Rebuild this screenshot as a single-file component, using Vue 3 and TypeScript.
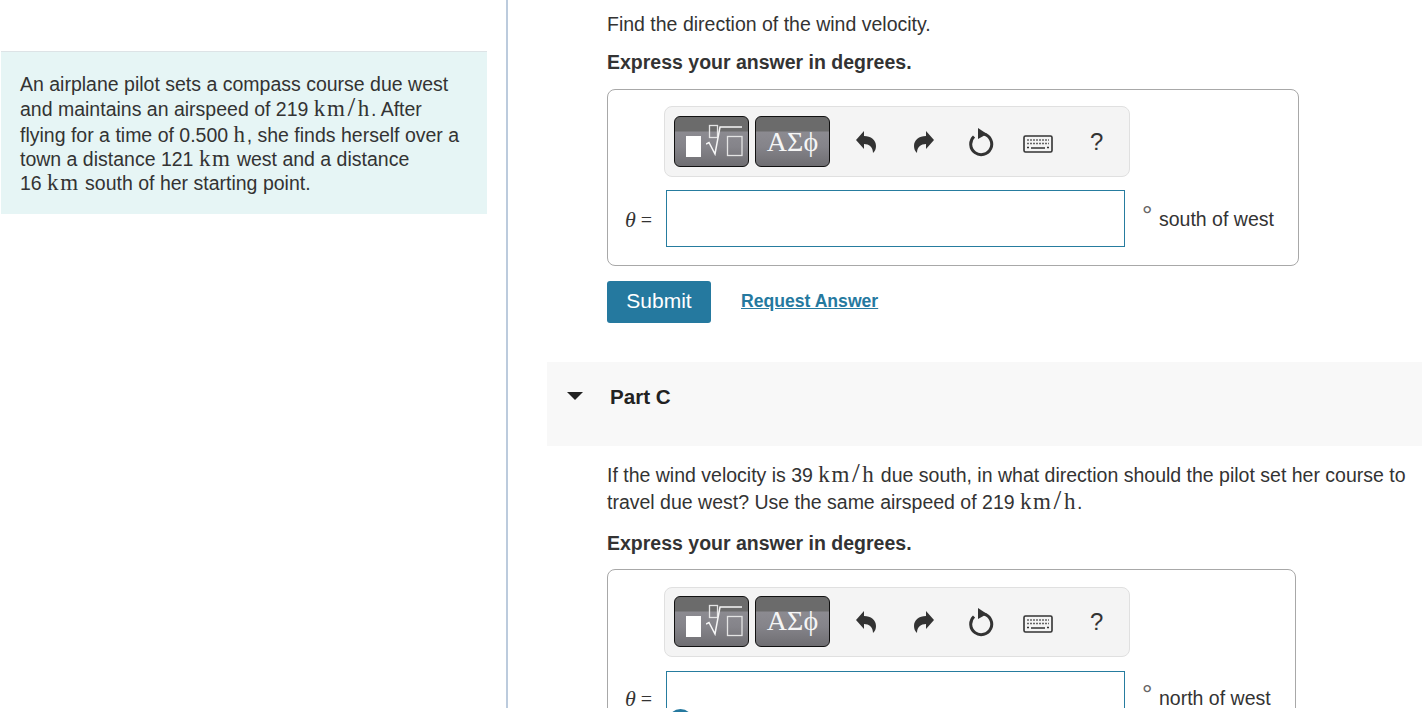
<script setup lang="ts">
interface Part {
  unit: string
  boxClass: string
}
const parts: Part[] = [
  { unit: 'south of west', boxClass: 'box-a' },
  { unit: 'north of west', boxClass: 'box-b' },
]
</script>

<template>
  <div class="page">
    <aside class="left">
      <div class="intro">
        <span class="line">An airplane pilot sets a compass course due west</span>
        <span class="line l2">and maintains an airspeed of 219 <span class="m">km<span class="sl">/</span>h</span>. After</span>
        <span class="line l3">flying for a time of 0.500 <span class="m">h</span>, she finds herself over a</span>
        <span class="line">town a distance 121 <span class="m">km</span> west and a distance</span>
        <span class="line">16 <span class="m">km</span> south of her starting point.</span>
      </div>
    </aside>
    <main class="right">
      <p class="q first">Find the direction of the wind velocity.</p>
      <p class="express e1">Express your answer in degrees.</p>

      <template v-for="(p, i) in parts" :key="p.unit">
        <template v-if="i === 1">
          <div class="actions">
            <button class="submit">Submit</button>
            <a class="req">Request Answer</a>
          </div>
          <div class="band">
            <svg class="tri" width="16" height="8" viewBox="0 0 16 8"><path d="M0 0H16L8 8Z" fill="#222" /></svg>
            <span class="part">Part C</span>
          </div>
          <p class="q para">
            If the wind velocity is 39 <span class="m">km<span class="sl">/</span>h</span> due south, in what direction should the pilot set her course to<br />
            travel due west? Use the same airspeed of 219 <span class="m">km<span class="sl">/</span>h</span>.
          </p>
          <p class="express e2">Express your answer in degrees.</p>
        </template>
        <section class="box" :class="p.boxClass">
          <div class="toolbar">
            <div class="tbtn t1">
              <span class="solid"></span>
              <svg class="root" width="38" height="34" viewBox="0 0 38 34" fill="none">
                <rect x="3.500" y="1.500" width="8" height="12" stroke="#e4e4e4" stroke-width="1.300" />
                <path d="M0 20 L3 18.500 L9 30 L14 3 H36" stroke="#f6f6f6" stroke-width="1.500" />
                <rect x="21.500" y="12.500" width="14.500" height="19" stroke="#e4e4e4" stroke-width="1.300" />
              </svg>
            </div>
            <div class="tbtn t2">ΑΣϕ</div>
            <svg class="ic undo" width="22" height="24" viewBox="0 0 22 24"><path d="M1 10 L9 1 V6 C16 6 21 10 21 16 C21 19 20 21 18 23 C18 17 14 14 9 14 V19 Z" fill="#333" /></svg>
            <svg class="ic redo" width="22" height="24" viewBox="0 0 22 24"><path d="M21 10 L13 1 V6 C6 6 1 10 1 16 C1 19 2 21 4 23 C4 17 8 14 13 14 V19 Z" fill="#333" /></svg>
            <svg class="ic reset" width="26" height="30" viewBox="0 0 26 30" fill="none"><path d="M16 7 A10.500 10.500 0 1 1 6 9.500" stroke="#333" stroke-width="3" /><path d="M10 1 L19 7 L10 12 Z" fill="#333" /></svg>
            <svg class="ic keys" width="30" height="18" viewBox="0 0 30 18">
              <rect x="1" y="1" width="28" height="16" rx="1.500" fill="#f4f4f4" stroke="#333" stroke-width="1.600" />
              <path d="M4 5h22M4 8.500h22" stroke="#666" stroke-width="1.500" stroke-dasharray="2 1" />
              <path d="M4 12.500h2M8 13h14M24 12.500h2" stroke="#333" stroke-width="1.500" />
            </svg>
            <span class="help">?</span>
          </div>
          <div class="answer">
            <span class="lhs"><i class="theta">θ</i> =</span>
            <div class="field"></div>
            <span class="deg">°</span>
            <span class="unit">{{ p.unit }}</span>
          </div>
        </section>
      </template>
    </main>
    <span class="bump"></span>
  </div>
</template>

<style>
html, body { margin: 0; background: #fff; }
</style>

<style scoped>
.page {
  position: relative;
  width: 1426px;
  height: 712px;
  display: flex;
  align-items: flex-start;
  overflow: hidden;
  font-family: "Liberation Sans", Arial, sans-serif;
  font-size: 19.5px;
  color: #333;
  background: #fff;
}
.left {
  box-sizing: border-box;
  width: 508px;
  height: 708px;
  flex: none;
  padding: 51px 19px 0 1px;
  border-right: 2px solid #bccbdd;
}
.intro {
  box-sizing: border-box;
  height: 163px;
  padding: 20px 0 0 19px;
  background: #e6f5f5;
  border-top: 1px solid #dde3e6;
  white-space: nowrap;
}
.line { display: block; line-height: 24px; }
.l2 { margin-top: 1px; }
.l3 { margin-top: 2px; }
.m {
  font-family: "Liberation Serif", "DejaVu Serif", serif;
  font-size: 23px;
  letter-spacing: 1.6px;
  line-height: 0;
}
.sl {
  display: inline-block;
  font-size: 28px;
  line-height: 0;
  margin: 0 1px;
  font-weight: 400;
}
.right {
  width: 914px;
  height: 708px;
  flex: none;
  overflow: hidden;
  padding-left: 39px;
  box-sizing: border-box;
}
.q, .express {
  margin: 0 0 0 60px;
  white-space: nowrap;
}
.first { padding-top: 12px; line-height: 24px; }
.express { font-weight: 700; line-height: 24px; }
.e1 { margin-top: 14px; }
.e2 { margin-top: 15px; }
.box {
  box-sizing: border-box;
  margin-left: 60px;
  border: 1px solid #a8a8a8;
  border-radius: 8px;
  background: #fff;
}
.box-a { width: 692px; height: 177px; margin-top: 15px; padding: 16px 0 0 56px; }
.box-b { width: 689px; height: 170px; margin-top: 14px; padding: 17px 0 0 56px; }
.toolbar {
  box-sizing: border-box;
  width: 466px;
  height: 71px;
  display: flex;
  align-items: center;
  padding-left: 9px;
  background: #f4f4f4;
  border: 1px solid #e0e0e0;
  border-radius: 8px;
}
.box-b .toolbar { height: 70px; }
.tbtn {
  box-sizing: border-box;
  position: relative;
  height: 51px;
  border: 1px solid #111;
  border-radius: 6px;
  background: linear-gradient(#6b6b6b 0, #6b6b6b 14px, #8c8b91 15px, #85848a 60%, #6f6e72 100%);
  color: #f5f5f5;
}
.box-b .tbtn { margin-top: -1px; }
.t1 { width: 75px; }
.t2 {
  width: 75px;
  margin-left: 6px;
  padding-top: 8px;
  text-align: center;
  font-family: "Liberation Serif", serif;
  font-size: 28px;
  line-height: 34px;
}
.box-b .t2 { padding-top: 7px; }
.solid {
  position: absolute;
  left: 11px;
  top: 19px;
  width: 15px;
  height: 21px;
  background: #fff;
}
.root { position: absolute; left: 31px; top: 7px; }
.ic { flex: none; }
.undo { margin-left: 25px; }
.redo { margin-left: 36px; }
.reset { margin-left: 33px; }
.keys { margin-left: 29px; margin-top: 4px; }
.help { margin-left: 37px; font-size: 24px; line-height: 28px; color: #333; }
.box-b .help { margin-top: -1px; }
.answer {
  position: relative;
  display: flex;
  align-items: center;
  margin-top: 13px;
  height: 57px;
}
.box-b .answer { margin-top: 14px; }
.lhs {
  position: absolute;
  left: -39px;
  top: 17px;
  font-family: "Liberation Serif", serif;
  font-size: 20px;
  white-space: nowrap;
}
.box-b .lhs { top: 15px; }
.theta { font-size: 22px; }
.field {
  box-sizing: border-box;
  width: 459px;
  height: 57px;
  flex: none;
  margin-left: 2px;
  border: 1px solid #267c9f;
  background: #fff;
}
.deg {
  position: relative;
  top: -4px;
  margin-left: 17px;
  width: 17px;
  font-size: 26px;
  line-height: 20px;
  color: #666;
}
.box-b .deg { top: -6px; }
.unit { white-space: nowrap; padding-top: 2px; }
.box-b .unit { padding-top: 0; margin-top: -2px; }
.actions {
  display: flex;
  align-items: center;
  margin: 15px 0 0 60px;
}
.submit {
  width: 104px;
  height: 42px;
  padding: 0 0 2px;
  border: 0;
  border-radius: 3px;
  background: #25799f;
  color: #fff;
  font: 21px "Liberation Sans", Arial, sans-serif;
}
.req {
  margin-left: 30px;
  padding-bottom: 2px;
  font-size: 17.6px;
  font-weight: 700;
  color: #25799f;
  text-decoration: underline;
  white-space: nowrap;
}
.band {
  box-sizing: border-box;
  height: 84px;
  margin: 39px 0 0 0;
  display: flex;
  align-items: flex-start;
  padding: 23px 0 0 20px;
  background: #f8f8f8;
}
.tri { margin-top: 7px; }
.part { margin-left: 27px; font-size: 20.6px; font-weight: 700; line-height: 24px; color: #222; }
.para { margin-top: 16px; line-height: 27px; }
.bump {
  position: absolute;
  left: 668px;
  top: 709px;
  width: 25px;
  height: 25px;
  border-radius: 50%;
  background: #25799f;
}
</style>
